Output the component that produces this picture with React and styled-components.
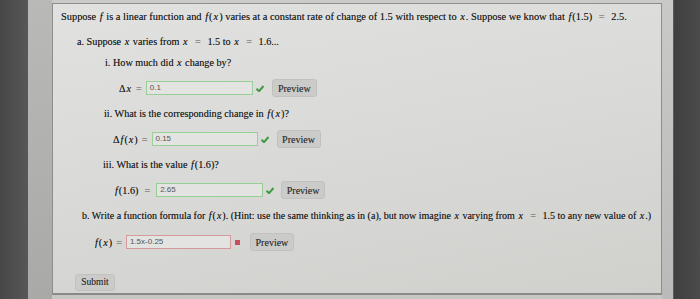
import React from "react";
import styled, { createGlobalStyle } from "styled-components";

const Global = createGlobalStyle`
  html, body { margin: 0; padding: 0; background: #4a4a4a; }
  #root { width: 700px; height: 299px; }
`;

const Frame = styled.div`
  display: flex;
  width: 700px;
  height: 299px;
  overflow: hidden;
  background: #4a4a4a;
`;

const LeftShade = styled.div`
  width: 28px;
  flex: none;
  background: linear-gradient(90deg, #474747, #575757);
`;

const LeftBezel = styled.div`
  width: 24px;
  flex: none;
  background: linear-gradient(180deg, #b9b9b7, #a9a9a7);
`;

const Screen = styled.div`
  flex: 1;
  display: flex;
  flex-direction: column;
  background: #c6c6c4;
`;

const TopStrip = styled.div`
  height: 3px;
  flex: none;
  background: #cbcbc9;
  border-bottom: 1px solid #8e8e8c;
`;

const Panel = styled.div`
  height: 291px;
  flex: none;
  box-sizing: border-box;
  border-left: 1px solid #8e8e8c;
  border-right: 1px solid #8e8e8c;
  border-bottom: 2px solid #8a8a88;
  background: linear-gradient(170deg, #e1e1df 0%, #dadad8 45%, #d0d0cd 100%);
  padding: 2px 0 0 8px;
  display: flex;
  flex-direction: column;
  font-family: "Liberation Serif", "Times New Roman", serif;
  color: #1f1f1f;
  font-size: 10.2px;
`;

const RightBezel = styled.div`
  width: 11px;
  flex: none;
  background: linear-gradient(180deg, #c9c9c7, #bababa);
`;

const RightShade = styled.div`
  width: 26px;
  flex: none;
  background: linear-gradient(90deg, #3f3f3f, #4b4b4b);
  border-left: 1px solid #5a5a5a;
`;

const Line = styled.div`
  display: flex;
  align-items: center;
  height: 20px;
  margin-top: ${(p) => p.$top}px;
  padding-left: ${(p) => p.$indent}px;
  white-space: nowrap;
  font-size: ${(p) => p.$size || 10.2}px;
  text-shadow: 0 0 0.25px rgba(30, 30, 30, 0.6);
`;

const M = styled.i`
  font-family: "Liberation Serif", "Times New Roman", serif;
  font-style: italic;
  margin: 0 1px;
`;

const Eq = styled.span`
  color: #8a8a88;
  margin: 0 ${(p) => p.$gap || 4}px;
`;

const Label = styled.span`
  display: inline-flex;
  align-items: center;
`;

const Input = styled.div`
  width: ${(p) => p.$w}px;
  height: 14px;
  box-sizing: border-box;
  border: 1px solid ${(p) => (p.$bad ? "#d79a9c" : "#97cf95")};
  background: #e3e3e1;
  font-family: "Liberation Sans", Arial, sans-serif;
  font-size: 8px;
  color: #555;
  padding-left: 3px;
  line-height: 12px;
  text-shadow: none;
`;

const Check = styled.svg`
  width: 8px;
  height: 7px;
  margin-left: 3px;
  flex: none;
`;

const Bad = styled.div`
  width: 5px;
  height: 5px;
  background: #c8505a;
  margin-left: 4px;
  flex: none;
`;

const Button = styled.div`
  height: 18px;
  width: ${(p) => p.$w}px;
  margin-left: ${(p) => p.$ml}px;
  box-sizing: border-box;
  border-radius: 3px;
  background: #cbcbc9;
  border: 1px solid #c1c1bf;
  color: #3a3a3a;
  font-size: 10px;
  display: flex;
  align-items: center;
  justify-content: center;
`;

const SubmitButton = styled(Button)`
  height: 17px;
  font-size: 9.5px;
`;

const Ok = () => (
  <Check viewBox="0 0 8 7">
    <path d="M0.5 3.8 L3 6.2 L7.5 1" stroke="#3f9b45" strokeWidth="2" fill="none" />
  </Check>
);

const fx = (
  <>
    <M>f</M>(<M>x</M>)
  </>
);

export default function App() {
  return (
    <>
      <Global />
      <Frame>
        <LeftShade />
        <LeftBezel />
        <Screen>
          <TopStrip />
          <Panel>
            <Line $top={0} $indent={0} $size={10.4}>
              <span>
                Suppose <M>f</M> is a linear function and <M>f</M>(<M>x</M>) varies at a constant rate of change
                of 1.5 with respect to <M>x</M>. Suppose we know that <M>f</M>(1.5) <Eq>=</Eq> 2.5.
              </span>
            </Line>
            <Line $top={5} $indent={16}>
              <span>
                a. Suppose <M>x</M> varies from <M>x</M> <Eq>=</Eq> 1.5 to <M>x</M> <Eq>=</Eq> 1.6...
              </span>
            </Line>
            <Line $top={1} $indent={44}>
              <span>
                i. How much did <M>x</M> change by?
              </span>
            </Line>
            <Line $top={6} $indent={58}>
              <Label>
                Δ<M>x</M>
                <Eq>=</Eq>
              </Label>
              <Input $w={107}>0.1</Input>
              <Ok />
              <Button $w={45} $ml={8}>Preview</Button>
            </Line>
            <Line $top={5} $indent={43}>
              <span>
                ii. What is the corresponding change in {fx}?
              </span>
            </Line>
            <Line $top={6} $indent={52}>
              <Label>
                Δ{fx}
                <Eq>=</Eq>
              </Label>
              <Input $w={106}>0.15</Input>
              <Ok />
              <Button $w={44} $ml={8}>Preview</Button>
            </Line>
            <Line $top={5} $indent={42}>
              <span>
                iii. What is the value <M>f</M>(1.6)?
              </span>
            </Line>
            <Line $top={6} $indent={53}>
              <Label>
                <M>f</M>(1.6)
                <Eq $gap={6}>=</Eq>
              </Label>
              <Input $w={107}>2.65</Input>
              <Ok />
              <Button $w={44} $ml={7}>Preview</Button>
            </Line>
            <Line $top={5} $indent={21} $size={10}>
              <span>
                b. Write a function formula for {fx}. (Hint: use the same thinking as in (a), but now imagine{" "}
                <M>x</M> varying from <M>x</M> <Eq>=</Eq> 1.5 to any new value of <M>x</M>.)
              </span>
            </Line>
            <Line $top={7} $indent={33}>
              <Label>
                {fx}
                <Eq>=</Eq>
              </Label>
              <Input $w={105} $bad>1.5x-0.25</Input>
              <Bad />
              <Button $w={44} $ml={10}>Preview</Button>
            </Line>
            <Line $top={20} $indent={14}>
              <SubmitButton $w={40} $ml={0}>Submit</SubmitButton>
            </Line>
          </Panel>
        </Screen>
        <RightBezel />
        <RightShade />
      </Frame>
    </>
  );
}
